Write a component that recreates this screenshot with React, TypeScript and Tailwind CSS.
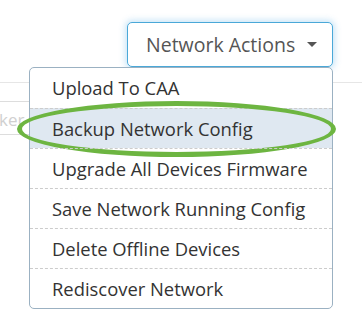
export default function App() {
  const items = [
    'Upload To CAA',
    'Backup Network Config',
    'Upgrade All Devices Firmware',
    'Save Network Running Config',
    'Delete Offline Devices',
    'Rediscover Network',
  ];

  return (
    <div
      className="relative w-[362px] h-[330px] bg-white overflow-hidden"
      style={{ fontFamily: '"Open Sans", "Noto Sans", sans-serif' }}
    >
      {/* page behind the dropdown */}
      <div className="absolute inset-x-0 top-[82px] flex flex-col">
        <div className="h-px bg-[#e6e6e6]" />
        <div className="mt-[18px] ml-[-10px] w-[80px] h-[34px] border border-[#dddddd] pl-[8px] text-[17px] leading-[36px] text-[#d0d0d0]">
          ker
        </div>
      </div>

      <div className="relative flex flex-col items-end pt-[22px] pr-[29px]">
        {/* toggle button */}
        <button className="w-[206px] h-[45px] rounded-[5px] border border-[#4aa8d8] bg-white shadow-[0_0_6px_2px_rgba(80,170,230,0.3)] flex items-center pl-[18px] gap-[12px] text-[19.5px] text-[#555555]">
          <span>Network Actions</span>
          <span className="w-0 h-0 border-x-[5px] border-t-[5px] border-x-transparent border-t-[#555555]" />
        </button>

        {/* dropdown menu */}
        <div className="w-[304px] rounded-[5px] border border-[#9bb1c2] bg-white">
          {items.map((item, i) => (
            <div
              key={item}
              className={`relative h-[40px] flex items-center pl-[22px] text-[18.4px] text-[#333333] ${
                i > 0 ? 'border-t border-dashed border-[#cccccc]' : ''
              } ${i === 1 ? 'bg-[#dfe8f1]' : ''}`}
            >
              {item}
              {i === 1 && (
                <div className="absolute left-[-13px] right-[-4px] top-[-8px] bottom-[-9px] rounded-[50%] border-[5px] border-[#6db541]" />
              )}
            </div>
          ))}
        </div>
      </div>
    </div>
  );
}
